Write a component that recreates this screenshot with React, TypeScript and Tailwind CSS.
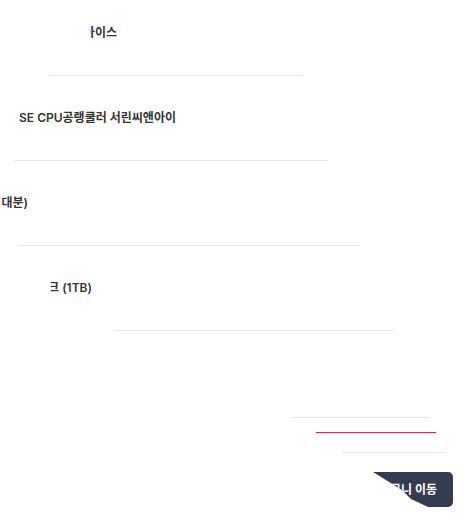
const font = "font-['Inter','Noto_Sans_CJK_KR','Noto_Sans',sans-serif]";

type Item = {
  name: string;
  textLeft: string;
  textWidth: string;
  lineLeft: string;
  lineWidth: string;
};

// 이름 영역은 잘려서 끝부분만 보인다
const items: Item[] = [
  { name: "게이밍 디바이스", textLeft: "ml-[90px]", textWidth: "w-[27px]", lineLeft: "ml-[50px]", lineWidth: "w-[252px]" },
  { name: "AK400 WHITE SE CPU공랭쿨러 서린씨앤아이", textLeft: "ml-[18px]", textWidth: "w-[158px]", lineLeft: "ml-[14px]", lineWidth: "w-[314px]" },
  { name: "정품 (벌크 대분)", textLeft: "ml-0", textWidth: "w-[28px]", lineLeft: "ml-[18px]", lineWidth: "w-[342px]" },
  { name: "외장 하드디스크 (1TB)", textLeft: "ml-[51px]", textWidth: "w-[41px]", lineLeft: "ml-[114px]", lineWidth: "w-[280px]" },
];

function Row({ item }: { item: Item }) {
  return (
    <div className="flex flex-col">
      <div className={`${item.textLeft} ${item.textWidth} flex h-4 justify-end overflow-hidden`}>
        <span className="whitespace-nowrap text-[12px] leading-4 font-semibold text-[#333]">
          {item.name}
        </span>
      </div>
      <div className={`${item.lineLeft} ${item.lineWidth} mt-[34px] mb-[34px] h-px bg-[#e6e6e6]`} />
    </div>
  );
}

export default function App() {
  return (
    <div className={`${font} h-[524px] w-[474px] overflow-hidden bg-white pt-[25px]`}>
      {items.map((item) => (
        <Row key={item.name} item={item} />
      ))}

      <div className="mt-[52px] ml-[292px] h-px w-[138px] bg-[#e6e6e6]" />
      <div className="mt-[14px] ml-[316px] h-px w-[120px] bg-[#d52a5b]" />
      <div className="mt-[19px] ml-[342px] h-px w-[103px] bg-[#e6e6e6]" />

      <div className="mt-[19px] flex justify-end pr-[21px]">
        <button className="flex h-[35px] w-[80px] items-center justify-end rounded-r-[5px] bg-[#333c50] pr-[16px] [clip-path:polygon(0_0,100%_0,100%_100%,55px_100%,38px_27px,29px_18px)]">
          <span className="whitespace-nowrap text-[12px] font-bold text-white">장바구니 이동</span>
        </button>
      </div>
    </div>
  );
}
